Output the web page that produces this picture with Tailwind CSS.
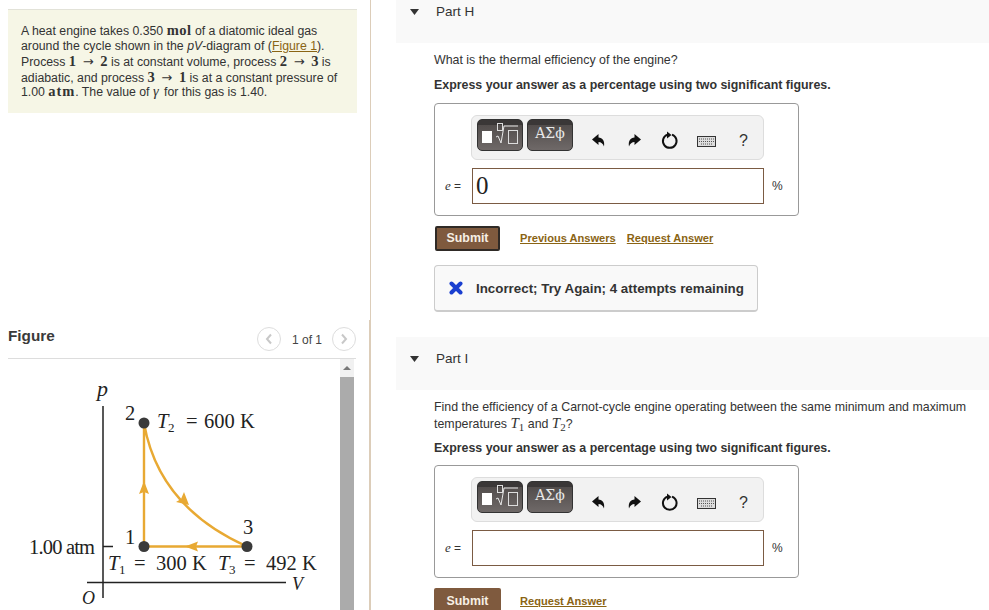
<!DOCTYPE html>
<html><head><meta charset="utf-8"><script src="https://cdn.jsdelivr.net/npm/@tailwindcss/browser@4"></script></head>
<body class="bg-white overflow-hidden">
<div class="flex w-[989px] h-[610px] overflow-hidden font-['Liberation_Sans',Arial,sans-serif] text-[12.4px] text-[#333]">
  <aside class="relative w-[370px] shrink-0 h-full">
    <div class="absolute left-[370px] top-0 h-[320px] w-px bg-[#dccdb9]"></div>
    <div class="absolute left-[369px] top-[320px] bottom-0 w-[2px] bg-[#dccdb9]"></div>
    <div class="mt-[9px] ml-2 w-[349px] h-[104px] bg-[#f6f6e6] border-t border-[#e2e2d8] pl-[13px] pt-[13px] pr-1 text-[12.3px] leading-[16px] whitespace-nowrap">
      <div class="h-[15px]">A heat engine takes 0.350 <b class="font-['Liberation_Serif',serif] text-[14.5px] tracking-[0.5px] leading-none font-semibold">mol</b> of a diatomic ideal gas</div>
      <div class="h-[16px]">around the cycle shown in the <i>pV</i>-diagram of (<a class="text-[#8a6414] underline">Figure 1</a>).</div>
      <div class="h-[16px]">Process <b class="font-['Liberation_Serif',serif] text-[14.5px] leading-none">1 <span class="font-['DejaVu_Sans',sans-serif] font-normal text-[13px] px-[3px]">→</span> 2</b> is at constant volume, process <b class="font-['Liberation_Serif',serif] text-[14.5px] leading-none">2 <span class="font-['DejaVu_Sans',sans-serif] font-normal text-[13px] px-[3px]">→</span> 3</b> is</div>
      <div class="h-[14px]">adiabatic, and process <b class="font-['Liberation_Serif',serif] text-[14.5px] leading-none">3 <span class="font-['DejaVu_Sans',sans-serif] font-normal text-[13px] px-[3px]">→</span> 1</b> is at a constant pressure of</div>
      <div>1.00 <b class="font-['Liberation_Serif',serif] text-[14.5px] tracking-[0.9px] leading-none font-semibold">atm</b>. The value of <i class="font-['Liberation_Serif',serif] text-[14.5px] leading-none pr-[2px]">γ</i> for this gas is 1.40.</div>
    </div>
    <div class="ml-2 w-[348px] mt-[207px] h-[39px] border-b border-[#ddd] flex items-start justify-between pt-[7px]">
      <h2 class="text-[15.3px] font-bold leading-[18px] text-[#3a3a3a]">Figure</h2>
      <div class="flex items-center gap-[10px]">
        <span class="w-6 h-6 rounded-full border border-[#ddd] flex items-center justify-center"><svg width="10" height="12" viewBox="0 0 10 12"><path d="M7 1.500 3 6l4 4.500" fill="none" stroke="#c8c8c8" stroke-width="2"/></svg></span>
        <span class="text-[12px] text-[#444] pt-[2px] pl-px">1 of 1</span>
        <span class="w-6 h-6 rounded-full border border-[#ddd] flex items-center justify-center"><svg width="10" height="12" viewBox="0 0 10 12"><path d="M3 1.500 7 6l-4 4.500" fill="none" stroke="#c8c8c8" stroke-width="2"/></svg></span>
      </div>
    </div>
    <div class="relative ml-2 w-[348px] h-[252px]">
      <svg class="absolute left-0 top-0" width="332" height="252" viewBox="8 358 332 252" font-family="'Liberation Serif',serif" font-size="20.500" fill="#222">
        <path d="M103 405V597M87 581.500H286M103 545.500H113" stroke="#222" stroke-width="1.500" fill="none"/>
        <path d="M144 422V545.500H247M144 422C154 480 190 520 247 545.500" stroke="#e8a933" stroke-width="2.400" fill="none"/>
        <path d="M144 480l-5 13 5-2 5 2zM189 504l-13-3 5-3 3-7zM185 545.500l13-5-2 5 2 5z" fill="#e8a933"/>
        <circle cx="144" cy="422" r="5.500" fill="#3a3a3a"/><circle cx="144" cy="545.500" r="5.500" fill="#3a3a3a"/><circle cx="247" cy="545.500" r="5.500" fill="#3a3a3a"/>
        <text x="97" y="395" font-style="italic" font-size="22">p</text>
        <text x="125" y="419">2</text><text x="125" y="543">1</text><text x="243" y="533">3</text>
        <text x="157" y="427" font-style="italic">T</text><text x="168" y="431" font-size="13">2</text><text x="186" y="427">=</text><text x="204" y="427">600 K</text>
        <text x="29" y="553" textLength="66">1.00 atm</text>
        <text x="108" y="569" font-style="italic">T</text><text x="119" y="573" font-size="13">1</text><text x="134" y="569">=</text><text x="156" y="569">300 K</text>
        <text x="218" y="569" font-style="italic">T</text><text x="229" y="573" font-size="13">3</text><text x="244" y="569">=</text><text x="266" y="569">492 K</text>
        <text x="292" y="589" font-style="italic" font-size="18">V</text>
        <text x="82" y="603" font-style="italic" font-size="18">O</text>
      </svg>
      <div class="absolute left-[332px] top-0 w-[14px] h-full bg-[#f1f1f1] flex flex-col">
        <div class="h-[18px] flex items-center justify-center"><div class="w-0 h-0 border-x-[4px] border-x-transparent border-b-[4px] border-b-[#777]"></div></div>
        <div class="flex-1 bg-[#ababab]"></div>
      </div>
    </div>
  </aside>
  <main class="ml-[26px] w-[593px] shrink-0">
    <div class="h-[43px] bg-[#f9f9f9] flex items-start pt-[4px]">
      <svg class="ml-[14px] mt-[5px]" width="9" height="6" viewBox="0 0 9 6"><path d="M0 0h9L4.500 6z" fill="#333"/></svg>
      <span class="ml-[17px] leading-[16px] text-[13.5px] text-[#333]">Part H</span>
    </div>
    <div class="ml-[38px]">
      <p class="mt-[9px] leading-[16px]">What is the thermal efficiency of the engine?</p>
      <p class="mt-[9px] leading-[16px] font-bold text-[#333]">Express your answer as a percentage using two significant figures.</p>
      <div class="mt-[10px] w-[365px] h-[113px] border border-[#999] rounded-[4px] relative">
        <div class="ml-[36px] mt-[11px] w-[293px] h-[45px] bg-[#f2f2f2] border border-[#ddd] rounded-[6px] flex items-center pl-[5px] pb-[6px]">
          <span class="w-[46px] h-[32px] rounded-[5px] border border-[#333] bg-linear-to-b from-[#3a3737] from-[16%] via-[#524d4c] via-[17%] to-[#6f6968] flex items-end justify-center pb-[2px]">
            <svg width="38" height="26" viewBox="0 0 38 26"><rect x="1" y="9" width="10" height="12" fill="#fff"/><path d="M15 15l2-1 3 7 3-17H37" fill="none" stroke="#e8e8e8" stroke-width="1"/><rect x="27.500" y="8.500" width="9" height="13" fill="none" stroke="#ddd"/><rect x="16.500" y="1.500" width="5" height="7" fill="none" stroke="#ddd"/></svg>
          </span>
          <span class="ml-[4px] w-[46px] h-[32px] rounded-[5px] border border-[#333] bg-linear-to-b from-[#3a3737] from-[16%] via-[#524d4c] via-[17%] to-[#6f6968] flex items-center justify-center pb-[3px] font-['DejaVu_Serif',serif] text-[14px] text-[#e8e8e8]">ΑΣϕ</span>
        </div>
        <svg class="absolute left-[156px] top-[29px]" width="16" height="16" viewBox="0 0 16 16"><path d="M1 6.500 7.500 1v3.500c4 0 6.500 3.500 5.500 9-1-3-3-4.500-5.500-4.500v3z" fill="#111"/></svg>
        <svg class="absolute left-[191px] top-[29px]" width="16" height="16" viewBox="0 0 16 16"><path d="M15 6.500 8.500 1v3.500c-4 0-6.500 3.500-5.500 9 1-3 3-4.500 5.500-4.500v3z" fill="#111"/></svg>
        <svg class="absolute left-[226px] top-[27px]" width="18" height="18" viewBox="0 0 18 18"><path d="M6.500 3.600A6.800 6.800 0 1 0 11 3.600" fill="none" stroke="#111" stroke-width="2"/><path d="M6 0.500v7l4.500-3.500z" fill="#111"/></svg>
        <svg class="absolute left-[262px] top-[32px]" width="19" height="11" viewBox="0 0 19 11"><rect x=".5" y=".5" width="18" height="10" fill="#ddd" stroke="#333"/><path d="M2 3h15M2 5.500h15M4 8h11" stroke="#555" stroke-width="1.200" stroke-dasharray="1 1"/></svg>
        <span class="absolute left-[304px] top-[26px] text-[16px] leading-[21px] text-[#333]">?</span>
        <div class="absolute left-0 top-[64px] w-full flex items-center">
          <span class="ml-[10px] w-[27px] text-[12px] text-[#333]"><i class="font-['Liberation_Serif',serif] text-[13px]">e</i> =</span>
          <div class="w-[292px] h-[36px] border border-[#7b5b43] bg-white flex items-center pl-[3px] font-['Liberation_Serif',serif] text-[25px] text-[#222]">0</div>
          <span class="ml-[8px] text-[12px]">%</span>
        </div>
      </div>
      <div class="mt-[10px] flex items-center">
        <button class="ml-px w-[65px] h-[25px] rounded-[2px] bg-[#7f5a3e] border-2 border-[#2f2a26] text-[#f7efe4] text-[12.4px] font-bold">Submit</button>
        <a class="ml-5 text-[11.1px] font-bold text-[#8a6414] underline">Previous Answers</a>
        <a class="ml-[11px] text-[11.1px] font-bold text-[#8a6414] underline">Request Answer</a>
      </div>
      <div class="mt-[14px] w-[324px] h-[47px] bg-[#f9f9f9] border border-[#ccc] border-b-2 rounded-[4px] flex items-center pl-[14px] text-[13.35px] font-bold text-[#333]">
        <svg width="14" height="14" viewBox="0 0 14 14"><path d="M2.500 2.500l9 9M11.500 2.500l-9 9" stroke="#1a3fd0" stroke-width="4" stroke-linecap="round"/></svg>
        <span class="ml-[13px] pt-[2px]">Incorrect; Try Again; 4 attempts remaining</span>
      </div>
    </div>
    <div class="mt-[25px] h-[53px] bg-[#f9f9f9] flex items-start pt-[14px]">
      <svg class="ml-[14px] mt-[5px]" width="9" height="6" viewBox="0 0 9 6"><path d="M0 0h9L4.500 6z" fill="#333"/></svg>
      <span class="ml-[17px] leading-[16px] text-[13.5px]">Part I</span>
    </div>
    <div class="ml-[38px]">
      <p class="mt-[9px] leading-[17px]">Find the efficiency of a Carnot-cycle engine operating between the same minimum and maximum<br>temperatures <i class="font-['Liberation_Serif',serif] text-[15px] leading-none">T</i><sub class="font-['Liberation_Serif',serif] text-[11px] leading-none">1</sub> and <i class="font-['Liberation_Serif',serif] text-[15px] leading-none">T</i><sub class="font-['Liberation_Serif',serif] text-[11px] leading-none">2</sub>?</p>
      <p class="mt-[7px] leading-[16px] font-bold">Express your answer as a percentage using two significant figures.</p>
      <div class="mt-[9px] w-[365px] h-[113px] border border-[#999] rounded-[4px] relative">
        <div class="ml-[36px] mt-[11px] w-[293px] h-[45px] bg-[#f2f2f2] border border-[#ddd] rounded-[6px] flex items-center pl-[5px] pb-[6px]">
          <span class="w-[46px] h-[32px] rounded-[5px] border border-[#333] bg-linear-to-b from-[#3a3737] from-[16%] via-[#524d4c] via-[17%] to-[#6f6968] flex items-end justify-center pb-[2px]">
            <svg width="38" height="26" viewBox="0 0 38 26"><rect x="1" y="9" width="10" height="12" fill="#fff"/><path d="M15 15l2-1 3 7 3-17H37" fill="none" stroke="#e8e8e8" stroke-width="1"/><rect x="27.500" y="8.500" width="9" height="13" fill="none" stroke="#ddd"/><rect x="16.500" y="1.500" width="5" height="7" fill="none" stroke="#ddd"/></svg>
          </span>
          <span class="ml-[4px] w-[46px] h-[32px] rounded-[5px] border border-[#333] bg-linear-to-b from-[#3a3737] from-[16%] via-[#524d4c] via-[17%] to-[#6f6968] flex items-center justify-center pb-[3px] font-['DejaVu_Serif',serif] text-[14px] text-[#e8e8e8]">ΑΣϕ</span>
        </div>
        <svg class="absolute left-[156px] top-[29px]" width="16" height="16" viewBox="0 0 16 16"><path d="M1 6.500 7.500 1v3.500c4 0 6.500 3.500 5.500 9-1-3-3-4.500-5.500-4.500v3z" fill="#111"/></svg>
        <svg class="absolute left-[191px] top-[29px]" width="16" height="16" viewBox="0 0 16 16"><path d="M15 6.500 8.500 1v3.500c-4 0-6.500 3.500-5.500 9 1-3 3-4.500 5.500-4.500v3z" fill="#111"/></svg>
        <svg class="absolute left-[226px] top-[27px]" width="18" height="18" viewBox="0 0 18 18"><path d="M6.500 3.600A6.800 6.800 0 1 0 11 3.600" fill="none" stroke="#111" stroke-width="2"/><path d="M6 0.500v7l4.500-3.500z" fill="#111"/></svg>
        <svg class="absolute left-[262px] top-[32px]" width="19" height="11" viewBox="0 0 19 11"><rect x=".5" y=".5" width="18" height="10" fill="#ddd" stroke="#333"/><path d="M2 3h15M2 5.500h15M4 8h11" stroke="#555" stroke-width="1.200" stroke-dasharray="1 1"/></svg>
        <span class="absolute left-[304px] top-[26px] text-[16px] leading-[21px] text-[#333]">?</span>
        <div class="absolute left-0 top-[64px] w-full flex items-center">
          <span class="ml-[10px] w-[27px] text-[12px] text-[#333]"><i class="font-['Liberation_Serif',serif] text-[13px]">e</i> =</span>
          <div class="w-[292px] h-[36px] border border-[#7b5b43] bg-white"></div>
          <span class="ml-[8px] text-[12px]">%</span>
        </div>
      </div>
      <div class="mt-[10px] flex items-center">
        <button class="w-[67px] h-[27px] rounded-[2px] bg-[#7f5a3e] text-[#f7efe4] text-[12.4px] font-bold">Submit</button>
        <a class="ml-[19px] text-[11.1px] font-bold text-[#8a6414] underline">Request Answer</a>
      </div>
    </div>
  </main>
</div>
</body></html>
